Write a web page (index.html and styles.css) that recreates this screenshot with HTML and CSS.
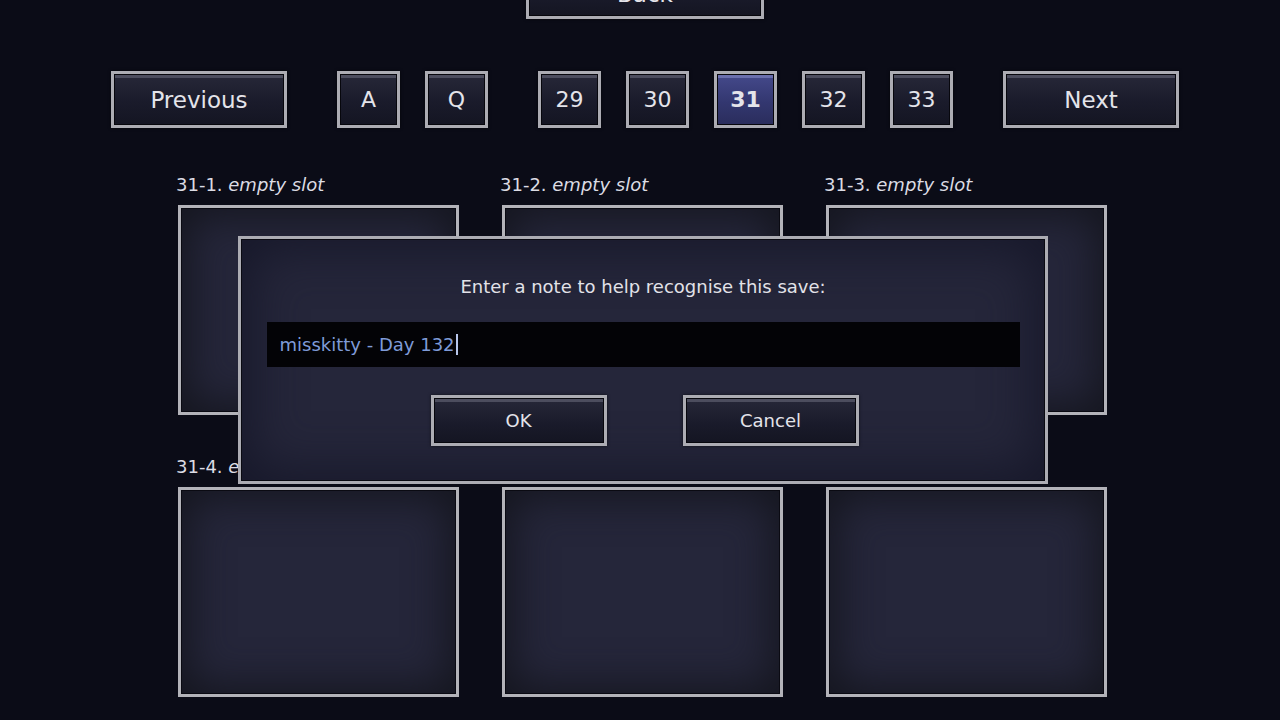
FILE: index.html
```html
<!DOCTYPE html>
<html lang="en">
<head>
    <meta charset="UTF-8">
    <meta name="viewport" content="width=device-width, initial-scale=1.0">
    <title>Save Game</title>
    <link rel="stylesheet" href="styles.css">
</head>
<body>
    <div class="screen">
        <div class="top-bar">
            <button class="btn back-btn">Back</button>
        </div>

        <nav class="pager">
            <button class="btn wide">Previous</button>
            <div class="group">
                <button class="btn page">A</button>
                <button class="btn page">Q</button>
            </div>
            <div class="group">
                <button class="btn page">29</button>
                <button class="btn page">30</button>
                <button class="btn page current">31</button>
                <button class="btn page">32</button>
                <button class="btn page">33</button>
            </div>
            <button class="btn wide">Next</button>
        </nav>

        <div class="slots">
            <div class="slot">
                <div class="slot-label">31-1. <em>empty slot</em></div>
                <div class="slot-box"></div>
            </div>
            <div class="slot">
                <div class="slot-label">31-2. <em>empty slot</em></div>
                <div class="slot-box"></div>
            </div>
            <div class="slot">
                <div class="slot-label">31-3. <em>empty slot</em></div>
                <div class="slot-box"></div>
            </div>
            <div class="slot">
                <div class="slot-label">31-4. <em>empty slot</em></div>
                <div class="slot-box"></div>
            </div>
            <div class="slot">
                <div class="slot-label">31-5. <em>empty slot</em></div>
                <div class="slot-box"></div>
            </div>
            <div class="slot">
                <div class="slot-label">31-6. <em>empty slot</em></div>
                <div class="slot-box"></div>
            </div>
        </div>

        <div class="dialog">
            <p class="prompt">Enter a note to help recognise this save:</p>
            <div class="note-input">misskitty - Day 132<span class="caret"></span></div>
            <div class="dialog-buttons">
                <button class="btn dialog-btn">OK</button>
                <button class="btn dialog-btn">Cancel</button>
            </div>
        </div>
    </div>
</body>
</html>
```

FILE: styles.css
```css
body {
    margin: 0;
    background-color: #0b0c17;
    font-family: 'DejaVu Sans', 'Liberation Sans', sans-serif;
    color: #e2e2e8;
    overflow: hidden;
}

.screen {
    position: relative;
    width: 1280px;
    height: 720px;
    overflow: hidden;
}

.btn {
    box-sizing: border-box;
    font-family: inherit;
    font-size: 23px;
    color: #e4e4ea;
    border: 3px solid #acacb3;
    background: linear-gradient(#272839, #1a1b2b 55%, #141522);
    box-shadow: inset 0 0 0 1px #07070d, inset 0 3px 0 1px #4c4d5e, 0 0 3px rgba(0,0,0,0.6);
    padding: 0;
    cursor: pointer;
}

.top-bar {
    display: flex;
    padding-left: 526px;
}

.back-btn {
    width: 238px;
    height: 57px;
    margin-top: -38px;
    padding-top: 6px;
}

.pager {
    display: flex;
    align-items: center;
    gap: 50px;
    padding-left: 111px;
    margin-top: 52px;
}

.group {
    display: flex;
    gap: 25px;
}

.btn.wide {
    width: 176px;
    height: 57px;
}

.btn.page {
    width: 63px;
    height: 57px;
    font-size: 22px;
}

.btn.current {
    font-weight: bold;
    background: linear-gradient(#454a8c, #333770 55%, #2a2d5c);
    box-shadow: inset 0 0 0 1px #07070d, inset 0 3px 0 1px #6a6fae, 0 0 3px rgba(0,0,0,0.6);
}

.slots {
    display: grid;
    grid-template-columns: repeat(3, 281px);
    column-gap: 43px;
    row-gap: 42px;
    padding-left: 178px;
    margin-top: 47px;
}

.slot-label {
    font-size: 18px;
    line-height: 20px;
    height: 20px;
    margin: 0 0 10px -2px;
    color: #dcdce4;
}

.slot-box {
    box-sizing: border-box;
    height: 210px;
    border: 3px solid #b3b3b9;
    background-color: #25263a;
    box-shadow: inset 0 0 0 1px #0a0a12, inset 0 0 40px 8px #15161f;
}

.dialog {
    position: absolute;
    left: 238px;
    top: 236px;
    width: 810px;
    height: 248px;
    box-sizing: border-box;
    border: 3px solid #acacb3;
    background-color: #25263a;
    box-shadow: inset 0 0 0 1px #0a0a12, inset 0 0 50px 10px #17182a;
    display: flex;
    flex-direction: column;
    align-items: center;
}

.prompt {
    margin: 38px 0 0;
    font-size: 18px;
    line-height: 20px;
    color: #e2e2e8;
}

.note-input {
    box-sizing: border-box;
    width: 753px;
    height: 45px;
    margin-top: 25px;
    padding: 0 13px;
    display: flex;
    align-items: center;
    background-color: #030306;
    color: #7f9bd8;
    font-size: 18px;
}

.caret {
    display: inline-block;
    width: 2px;
    height: 21px;
    margin-left: 1px;
    background-color: #b8c6ea;
}

.dialog-buttons {
    display: flex;
    gap: 76px;
    margin-top: 28px;
    margin-left: 3px;
}

.dialog-btn {
    width: 176px;
    height: 51px;
    font-size: 18px;
}
```
